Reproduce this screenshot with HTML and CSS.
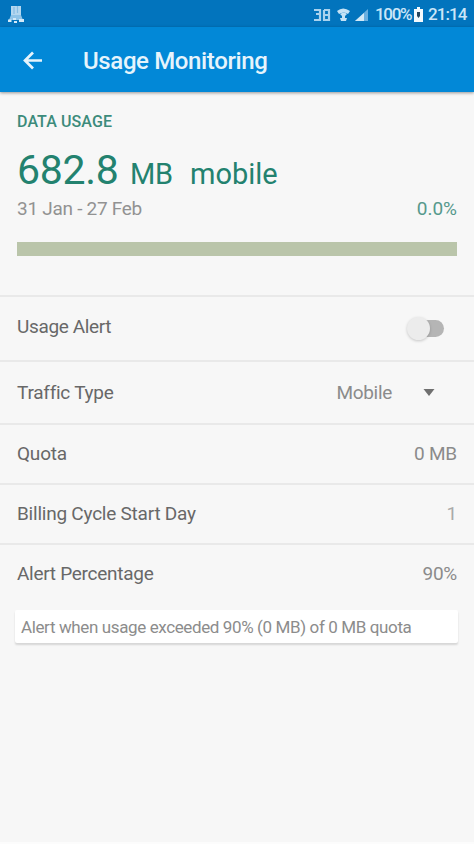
FILE: index.html
```html
<!DOCTYPE html>
<html lang="en">
<head>
<meta charset="utf-8">
<title>Usage Monitoring</title>
<link rel="stylesheet" href="styles.css">
</head>
<body>
<div class="screen">
  <div class="status">
    <svg class="notice" width="18" height="19" viewBox="0 0 18 19"><path d="M4 1h10v11H4z" fill="#b4d7ef"/><path d="M7 2v7M10.500 1v7M5 11h8" stroke="#86bde4" stroke-width="1.200"/><path d="M4 10l-2 5h14l-2-5z" fill="#8fc4e8"/><path d="M1 14.500h3.500v2.500H1zM6 13h3v2H6zM7 16h3v2H7zM12 14h5v3h-5z" fill="#d3e9f8"/></svg>
    <div class="indicators">
      <svg width="56" height="16" viewBox="0 0 56 16"><g fill="none" stroke="#a9d2ee" stroke-width="2.200"><path d="M0 3h6v4H2M6 7v6H0M10 3h5v10h-5V3M9 8h6"/></g><g fill="#c5e2f5"><path d="M23 4q6-5 13 0l-2 3q-4-3-9 0z"/><path d="M26 7q4-3 7 0l-2 2v2h2l-1 3h-5l-1-3h2V9z"/></g><path d="M54 2v12H41z" fill="#69afe0"/><path d="M50 6v8H41z" fill="#d3e9f7"/></svg>
      <span class="charge">100%</span>
      <svg width="9" height="16" viewBox="0 0 9 16"><path d="M3 0h3v2h3v13H0V2h3z" fill="#f4fafd"/><path d="M3 5h3v4L4.500 11 3 9z" fill="#28465c"/></svg>
      <span class="clock">21:14</span>
    </div>
  </div>
  <header class="appbar">
    <svg width="20" height="20" viewBox="0 0 20 20"><path d="M19 9.500H3M10 1.500L2 9.500l8 8" fill="none" stroke="#e6f4fc" stroke-width="2.700"/></svg>
    <h1>Usage Monitoring</h1>
  </header>
  <section class="usage">
    <h2>DATA USAGE</h2>
    <div class="amount"><span class="number">682.8</span><span class="unit">MB</span><span class="network">mobile</span></div>
    <div class="period"><span class="dates">31 Jan - 27 Feb</span><span class="percent">0.0%</span></div>
    <div class="bar"></div>
  </section>
  <div class="row alert"><span class="label-alert">Usage Alert</span><div class="switch"><div class="knob"></div></div></div>
  <div class="row traffic"><span class="label-traffic">Traffic Type</span><div class="select"><span class="value-mobile">Mobile</span><svg width="12" height="7" viewBox="0 0 12 7"><path d="M0.500 0h11L6 7z" fill="#707070"/></svg></div></div>
  <div class="row quota"><span class="label-quota">Quota</span><span class="value value-quota">0 MB</span></div>
  <div class="row billing"><span class="label-billing">Billing Cycle Start Day</span><span class="value day">1</span></div>
  <div class="row percentage"><span class="label-percentage">Alert Percentage</span><span class="value value-percentage">90%</span></div>
  <div class="note"><span>Alert when usage exceeded 90% (0 MB) of 0 MB quota</span></div>
</div>
</body>
</html>
```
FILE: styles.css
```css
* { box-sizing: border-box; }
body { margin: 0; font-family: Roboto, sans-serif; background: #fcfcfc; }
span, h1, h2 { white-space: nowrap; }
svg { display: block; flex: none; }
.screen { height: 842px; width: 474px; background: #f7f7f7; overflow: hidden; }
.status { height: 27px; background: #0274bd; display: flex; justify-content: space-between; padding: 5px 8px 0 7px; color: #cbe6f8; }
.indicators { display: flex; height: 19px; align-items: center; }
.charge, .clock { font-size: 17px; line-height: 19px; font-weight: 500; }
.charge { margin-left: 5px; margin-right: 3px; width: 36px; letter-spacing: -1.3px; }
.clock { margin-left: 5px; width: 38px; letter-spacing: -.9px; }
.appbar { height: 65px; background: #0288d7; display: flex; align-items: center; padding: 2px 0 0 23px; box-shadow: 0 1px 3px #0006; }
.appbar h1 { margin: 0 0 0 40px; color: #e6f4fc; font-size: 24px; font-weight: 500; line-height: 30px; letter-spacing: -.37px; }
.usage { height: 203px; padding: 20px 17px 0; color: #23826f; }
.usage h2 { margin: 0; font-size: 16px; line-height: 20px; font-weight: 500; color: #3c8b7b; letter-spacing: .1px; }
.amount { display: flex; align-items: baseline; height: 48px; margin-top: 14px; line-height: 48px; }
.number { font-size: 41px; width: 113px; letter-spacing: -.3px; }
.unit { font-size: 29px; width: 60px; letter-spacing: -.4px; }
.network { font-size: 29px; }
.period { display: flex; justify-content: space-between; height: 24px; margin-top: 3px; line-height: 24px; font-size: 19px; }
.dates { color: #929292; letter-spacing: -.28px; }
.percent { color: #56998c; }
.bar { height: 14px; margin-top: 21px; background: #bac5aa; }
.row { border-top: 2px solid #e9e9e9; display: flex; justify-content: space-between; align-items: center; padding: 0 17px; font-size: 19px; line-height: 24px; color: #686868; }
.alert { height: 65px; padding-bottom: 4px; letter-spacing: -.36px; }
.traffic { height: 63px; letter-spacing: -.25px; }
.quota { height: 60px; letter-spacing: -.2px; }
.billing { height: 60px; letter-spacing: -.23px; }
.percentage { height: 61px; padding-bottom: 2px; letter-spacing: -.28px; }
.value, .select { color: #8b8b8b; }
.day { color: #aaa; }
.switch { width: 33px; height: 17px; background: #b5b5b5; border-radius: 9px; margin: 4px 13px 0 0; display: flex; align-items: center; }
.knob { width: 23px; height: 23px; flex: none; margin-left: -4px; border-radius: 50%; background: #ececec; box-shadow: 0 1px 3px #0003; }
.select { display: flex; align-items: center; padding-right: 22px; gap: 31px; }
.value-mobile { letter-spacing: -.3px; }
.note { height: 33px; margin: 6px 16px 0 15px; padding: 1px 6px 0; display: flex; align-items: center; background: #fff; border-radius: 2px; box-shadow: 0 2px 2px #0002; font-size: 17px; letter-spacing: -.38px; color: #8c8c8c; }
```
